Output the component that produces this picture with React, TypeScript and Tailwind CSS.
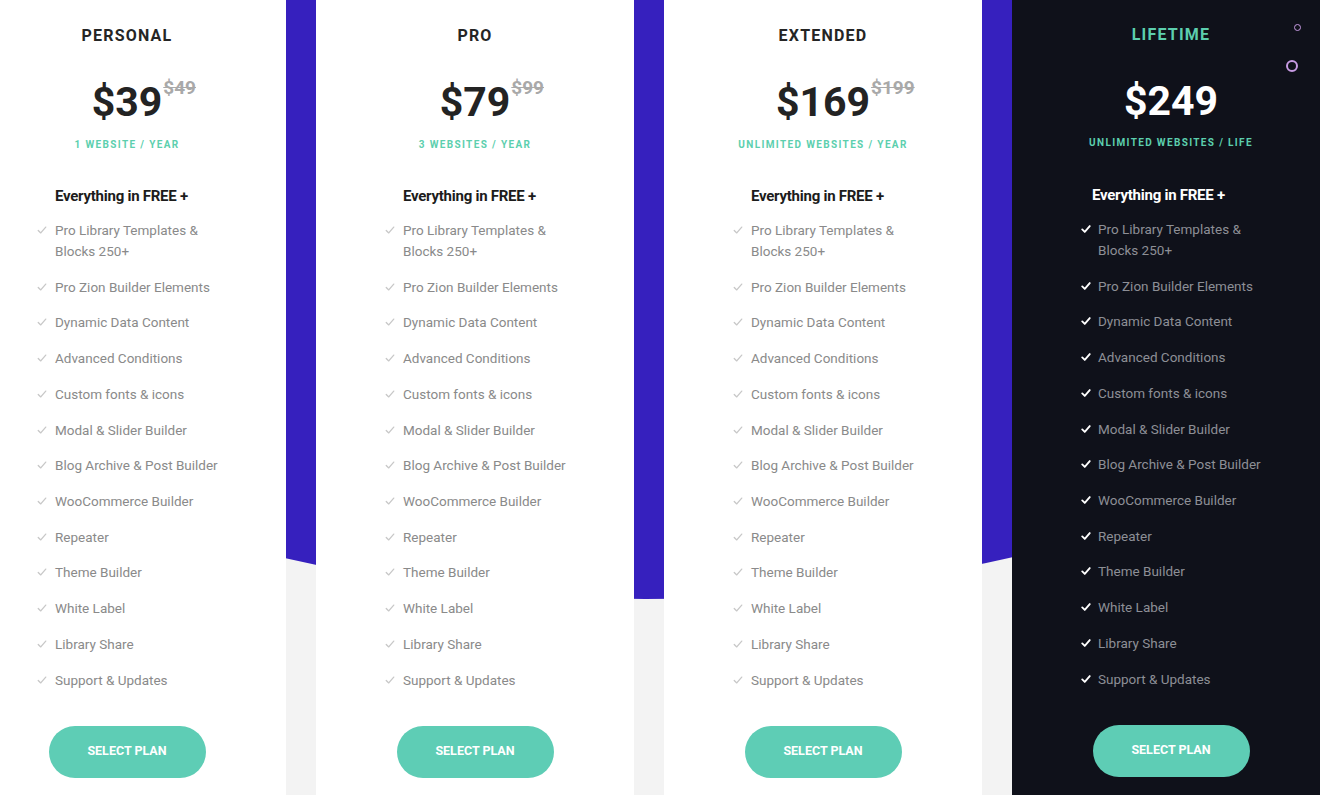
import React from 'react';

interface Plan {
  name: string;
  price: string;
  oldPrice?: string;
  period: string;
  dark?: boolean;
}

const plans: Plan[] = [
  { name: 'PERSONAL', price: '$39', oldPrice: '$49', period: '1 WEBSITE / YEAR' },
  { name: 'PRO', price: '$79', oldPrice: '$99', period: '3 WEBSITES / YEAR' },
  { name: 'EXTENDED', price: '$169', oldPrice: '$199', period: 'UNLIMITED WEBSITES / YEAR' },
  { name: 'LIFETIME', price: '$249', period: 'UNLIMITED WEBSITES / LIFE', dark: true },
];

const features = [
  'Pro Library Templates & Blocks 250+',
  'Pro Zion Builder Elements',
  'Dynamic Data Content',
  'Advanced Conditions',
  'Custom fonts & icons',
  'Modal & Slider Builder',
  'Blog Archive & Post Builder',
  'WooCommerce Builder',
  'Repeater',
  'Theme Builder',
  'White Label',
  'Library Share',
  'Support & Updates',
];

function Check({ dark }: { dark?: boolean }) {
  return (
    <svg
      viewBox="0 0 12 12"
      className="w-[10px] h-[10px] flex-shrink-0 mt-[5px]"
      fill="none"
      stroke={dark ? '#ffffff' : '#c8c8c8'}
      strokeWidth={dark ? 2.2 : 1.6}
      strokeLinecap="round"
      strokeLinejoin="round"
    >
      <polyline points="1.5,6.5 4.5,9.5 10.5,2.5" />
    </svg>
  );
}

function PlanCard({ plan }: { plan: Plan }) {
  const dark = plan.dark;
  return (
    <div
      className={`relative w-[318px] flex-shrink-0 h-[820px] flex flex-col items-center ${
        dark ? 'bg-[#0f111a] pt-[25px]' : 'bg-white pt-[26px]'
      }`}
    >
      {dark && (
        <>
          <span className="absolute left-[282px] top-[24px] w-[7px] h-[7px] rounded-full border-[1.5px] border-[#c79be3]" />
          <span className="absolute left-[274px] top-[60px] w-[12px] h-[12px] rounded-full border-2 border-[#c79be3]" />
        </>
      )}
      <h3
        className={`text-[16px] font-bold tracking-[1.2px] leading-[20px] ${
          dark ? 'text-[#5ccfae]' : 'text-[#252525]'
        }`}
      >
        {plan.name}
      </h3>
      <div className="relative mt-[31px]">
        <span
          className={`text-[41px] font-bold leading-[50px] ${dark ? 'text-white' : 'text-[#232323]'}`}
        >
          {plan.price}
        </span>
        {plan.oldPrice && (
          <span className="absolute left-full top-0 ml-[1px] text-[19px] font-bold leading-[22px] text-[#a9a9a9] line-through">
            {plan.oldPrice}
          </span>
        )}
      </div>
      <p
        className={`text-[10px] font-bold tracking-[1.35px] leading-[14px] text-[#5ccfae] ${
          dark ? 'mt-[10px]' : 'mt-[11px]'
        }`}
      >
        {plan.period}
      </p>
      <div className={`w-full pl-[87px] ${dark ? 'mt-[35px]' : 'mt-[34px]'}`}>
        <p
          className={`text-[15px] font-bold tracking-[-0.25px] leading-[20px] ${
            dark ? 'text-white -ml-[7px]' : 'text-[#1c1c1c]'
          }`}
        >
          Everything in FREE +
        </p>
        <ul className="mt-[14px] -ml-[18px] flex flex-col gap-[14.73px]">
          {features.map((f) => (
            <li key={f} className="flex items-start gap-[8px]">
              <Check dark={dark} />
              <span
                className={`w-[170px] text-[13.5px] leading-[21px] ${
                  dark ? 'text-[#8d8f96] -ml-[1px]' : 'text-[#8a8a8a]'
                }`}
              >
                {f}
              </span>
            </li>
          ))}
        </ul>
      </div>
      <button className="mt-[35px] w-[157px] h-[52px] rounded-full bg-[#5ecdb5] text-white text-[12.5px] font-bold">
        SELECT PLAN
      </button>
    </div>
  );
}

export default function App() {
  return (
    <div
      className="relative w-[1320px] h-[795px] overflow-hidden bg-[#f3f3f3]"
      style={{ fontFamily: 'Roboto, "Liberation Sans", sans-serif' }}
    >
      {/* purple wave behind the cards */}
      <svg
        className="absolute left-0 top-0 w-[1320px] h-[795px]"
        viewBox="0 0 1320 795"
        preserveAspectRatio="none"
      >
        <path d="M0 0 H1320 V459 Q650 735 0 467 Z" fill="#3620be" />
      </svg>
      <div className="relative flex gap-[30px] ml-[-32px]">
        {plans.map((p) => (
          <PlanCard key={p.name} plan={p} />
        ))}
      </div>
    </div>
  );
}
